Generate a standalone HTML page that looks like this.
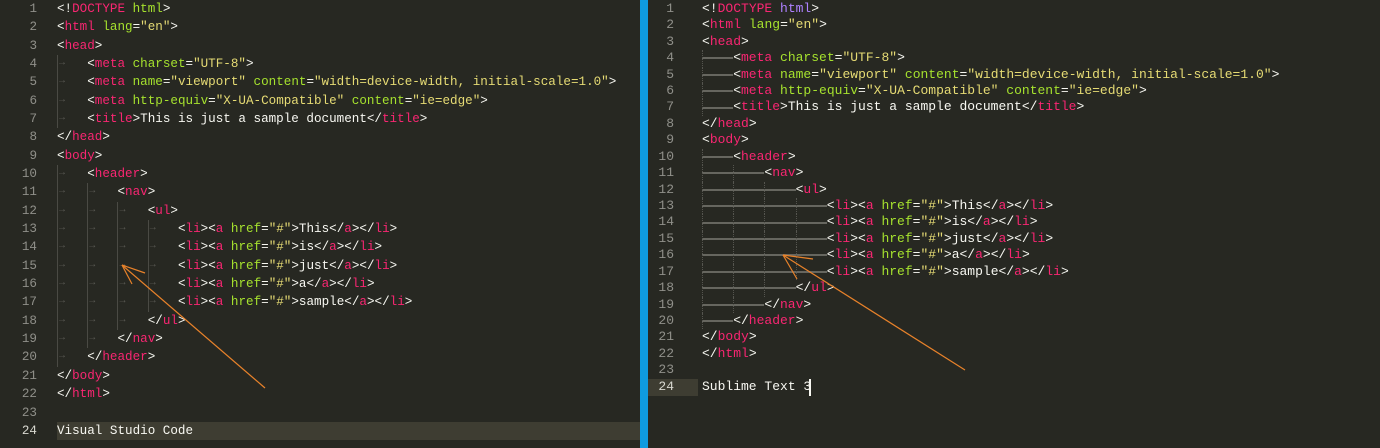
<!DOCTYPE html>
<html><head><style>
body{margin:0;width:1380px;height:448px;background:#272822;overflow:hidden;position:relative;font-family:"Liberation Mono",monospace}
.p{position:absolute;top:0;height:448px;background:#272822}
.l{position:absolute;white-space:pre;color:#f8f8f2}
.n{position:absolute;text-align:right;color:#90908a}
.t{color:#f92672}.a{color:#a6e22e}.s{color:#e6db74}.v{color:#ae81ff}
.ar{position:absolute;color:#5a5a54;font-size:10px}
.vg{position:absolute;width:1px;background:#4a4a44}
.vd{position:absolute;width:0;border-left:1px dotted #55554f}
.hg{position:absolute;height:2px;background:#66665f}
</style></head><body>
<div class="p" style="left:0;width:640px"></div>
<div style="position:absolute;left:640px;top:0;width:8px;height:448px;background:#0f9be0"></div>
<div class="p" style="left:648px;width:732px"></div>
<div style="position:absolute;left:57px;top:422px;width:583px;height:18px;background:#3e3d32"></div>
<div style="position:absolute;left:648px;top:379px;width:50px;height:17px;background:#3e3d32"></div>
<div style="position:absolute;left:809px;top:379px;width:2px;height:17px;background:#f8f8f2"></div>
<div id="L"></div><div id="R"></div>
<svg width="1380" height="448" style="position:absolute;left:0;top:0">
<g stroke="#e8822a" stroke-width="1.2" fill="none">
<line x1="265" y1="388" x2="122" y2="265"/><line x1="122" y1="265" x2="145" y2="273"/><line x1="122" y1="265" x2="132" y2="284"/>
<line x1="965" y1="370" x2="783" y2="255"/><line x1="783" y1="255" x2="813" y2="259"/><line x1="783" y1="255" x2="797" y2="279"/>
</g></svg>
<script>
var lines=[[0,'<span>&lt;!</span><span class="t">DOCTYPE</span> <span class="a X">html</span>&gt;'],
[0,'&lt;<span class="t">html</span> <span class="a">lang</span>=<span class="s">"en"</span>&gt;'],
[0,'&lt;<span class="t">head</span>&gt;'],
[1,'&lt;<span class="t">meta</span> <span class="a">charset</span>=<span class="s">"UTF-8"</span>&gt;'],
[1,'&lt;<span class="t">meta</span> <span class="a">name</span>=<span class="s">"viewport"</span> <span class="a">content</span>=<span class="s">"width=device-width, initial-scale=1.0"</span>&gt;'],
[1,'&lt;<span class="t">meta</span> <span class="a">http-equiv</span>=<span class="s">"X-UA-Compatible"</span> <span class="a">content</span>=<span class="s">"ie=edge"</span>&gt;'],
[1,'&lt;<span class="t">title</span>&gt;This is just a sample document&lt;/<span class="t">title</span>&gt;'],
[0,'&lt;/<span class="t">head</span>&gt;'],[0,'&lt;<span class="t">body</span>&gt;'],
[1,'&lt;<span class="t">header</span>&gt;'],[2,'&lt;<span class="t">nav</span>&gt;'],[3,'&lt;<span class="t">ul</span>&gt;']];
['This','is','just','a','sample'].forEach(function(w){lines.push([4,'&lt;<span class="t">li</span>&gt;&lt;<span class="t">a</span> <span class="a">href</span>=<span class="s">"#"</span>&gt;'+w+'&lt;/<span class="t">a</span>&gt;&lt;/<span class="t">li</span>&gt;'])});
lines.push([3,'&lt;/<span class="t">ul</span>&gt;'],[2,'&lt;/<span class="t">nav</span>&gt;'],[1,'&lt;/<span class="t">header</span>&gt;'],[0,'&lt;/<span class="t">body</span>&gt;'],[0,'&lt;/<span class="t">html</span>&gt;'],[0,''],[0,'X']);
function build(id,x0,nx,lh,fs,cw,last,right){var h='';
lines.forEach(function(l,i){var top=9+i*lh-lh/2;var c=l[1];if(c=='X')c=last;
if(right)c=c.replace('a X','v');
h+='<div class="n" style="left:'+(nx-40)+'px;width:40px;top:'+top+'px;line-height:'+lh+'px;font-size:'+fs+'px;'+(i==23?'color:#d8d8d0':'')+'">'+(i+1)+'</div>';
h+='<div class="l" style="left:'+(x0+l[0]*4*cw)+'px;top:'+top+'px;line-height:'+lh+'px;font-size:'+fs+'px">'+c+'</div>';
for(var k=0;k<l[0];k++){var gx=x0+k*4*cw;
if(right){h+='<div class="hg" style="left:'+gx+'px;width:'+(4*cw)+'px;top:'+(top+lh/2-1)+'px"></div>';
h+='<div class="vd" style="left:'+gx+'px;top:'+top+'px;height:'+lh+'px"></div>';}
else{h+='<div class="ar" style="left:'+(gx+2)+'px;top:'+(top+3)+'px">&#8594;</div>';
if(k>0)h+='<div class="vg" style="left:'+gx+'px;top:'+top+'px;height:'+lh+'px"></div>';}}
if(!right&&l[0]>0)h+='<div class="vg" style="left:'+x0+'px;top:'+top+'px;height:'+lh+'px"></div>';
});document.getElementById(id).innerHTML=h;}
build('L',57,37,18.35,12.6,7.56,'Visual Studio Code',false);
build('R',702,674,16.43,13,7.8,'Sublime Text 3',true);
</script>
</body></html>
